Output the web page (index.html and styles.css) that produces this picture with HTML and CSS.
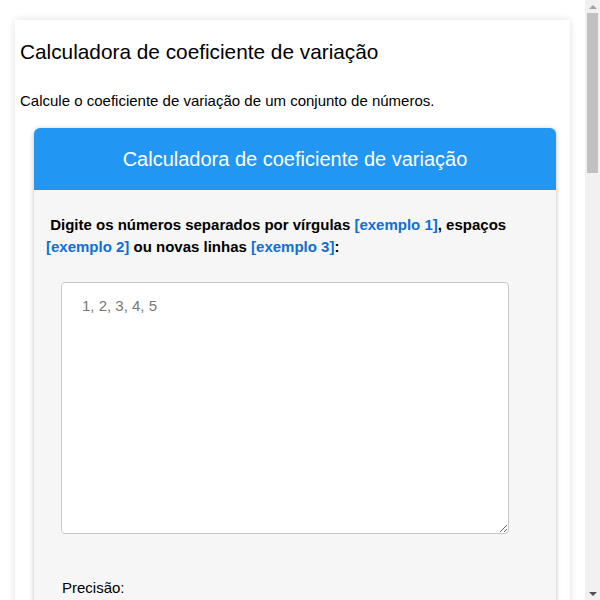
FILE: index.html
```html
<!DOCTYPE html>
<html lang="pt">
<head>
<meta charset="utf-8">
<title>Calculadora de coeficiente de variação</title>
<link rel="stylesheet" href="styles.css">
</head>
<body>
<div class="page">
  <div class="card">
    <h2 class="title">Calculadora de coeficiente de variação</h2>
    <p class="lead">Calcule o coeficiente de variação de um conjunto de números.</p>
    <div class="calc">
      <div class="calc-head">Calculadora de coeficiente de variação</div>
      <div class="calc-body">
        <p class="instr">&nbsp;Digite os números separados por vírgulas <a href="#" class="ex">[exemplo 1]</a>, espaços <a href="#" class="ex">[exemplo 2]</a> ou novas linhas <a href="#" class="ex">[exemplo 3]</a>:</p>
        <div class="field">
          <textarea class="nums" placeholder="1, 2, 3, 4, 5"></textarea>
        </div>
        <div class="field prec">
          <label class="prec-label">Precisão:</label>
          <select class="prec-select"><option>2</option></select>
        </div>
        <div class="field">
          <button class="btn">Calcular</button>
        </div>
      </div>
    </div>
    <div class="filler"></div>
  </div>
</div>
<div class="scrollbar">
  <div class="sb-arrow sb-up"></div>
  <div class="sb-thumb"></div>
  <div class="sb-space"></div>
  <div class="sb-arrow sb-down"></div>
</div>
</body>
</html>
```
FILE: styles.css
```css
html, body {
  margin: 0;
  padding: 0;
  background: #ffffff;
  font-family: "Liberation Sans", Arial, sans-serif;
  color: #000;
}
.page {
  padding: 20px 30px 20px 15px;
}
.card {
  background: #fff;
  box-shadow: 0 0 8px rgba(0,0,0,0.12);
  padding: 0 14px 20px 5px;
}
.title {
  font-size: 20.8px;
  font-weight: normal;
  line-height: 24px;
  margin: 0;
  padding-top: 20px;
}
.lead {
  font-size: 15px;
  line-height: 17px;
  margin: 28px 0 19px 0;
}
.calc {
  margin-left: 14px;
  border-radius: 6px;
  background: #f6f6f6;
  box-shadow: 0 1px 5px rgba(0,0,0,0.25);
}
.calc-head {
  background: #2196f3;
  color: #fff;
  font-size: 20px;
  height: 62px;
  line-height: 62px;
  text-align: center;
  border-radius: 6px 6px 0 0;
}
.calc-body {
  padding: 24px 12px 40px 12px;
}
.instr {
  margin: 0;
  font-size: 15px;
  font-weight: bold;
  line-height: 22px;
}
.ex {
  color: #0f6fd3;
  text-decoration: none;
}
.field {
  padding-left: 15px;
}
.nums {
  display: block;
  box-sizing: border-box;
  margin-top: 24px;
  width: 448px;
  height: 252px;
  border: 1px solid #c8c8c8;
  border-radius: 4px;
  padding: 14px 20px;
  font-family: "Liberation Sans", Arial, sans-serif;
  font-size: 15px;
  background: #fff;
  resize: vertical;
}
.nums::placeholder {
  color: #777;
}
.prec {
  margin-top: 45px;
}
.prec-label {
  display: block;
  font-size: 15px;
  line-height: 17px;
  padding-left: 1px;
}
.prec-select {
  margin-top: 8px;
  font-size: 15px;
  padding: 6px 10px;
}
.btn {
  margin-top: 20px;
  background: #2196f3;
  color: #fff;
  border: 0;
  border-radius: 4px;
  font-size: 16px;
  padding: 10px 24px;
}
.filler {
  height: 1300px;
}
.scrollbar {
  position: fixed;
  top: 0;
  right: 0;
  width: 15px;
  height: 100vh;
  background: #f1f1f1;
  display: flex;
  flex-direction: column;
  align-items: center;
}
.sb-arrow {
  height: 13px;
  width: 15px;
  display: flex;
  align-items: center;
  justify-content: center;
}
.sb-up::before {
  content: "";
  border-left: 4px solid transparent;
  border-right: 4px solid transparent;
  border-bottom: 4px solid #a3a3a3;
}
.sb-down::before {
  content: "";
  border-left: 4px solid transparent;
  border-right: 4px solid transparent;
  border-top: 4px solid #505050;
}
.sb-thumb {
  width: 11px;
  height: 160px;
  background: #c1c1c1;
}
.sb-space {
  flex: 1;
}
```
